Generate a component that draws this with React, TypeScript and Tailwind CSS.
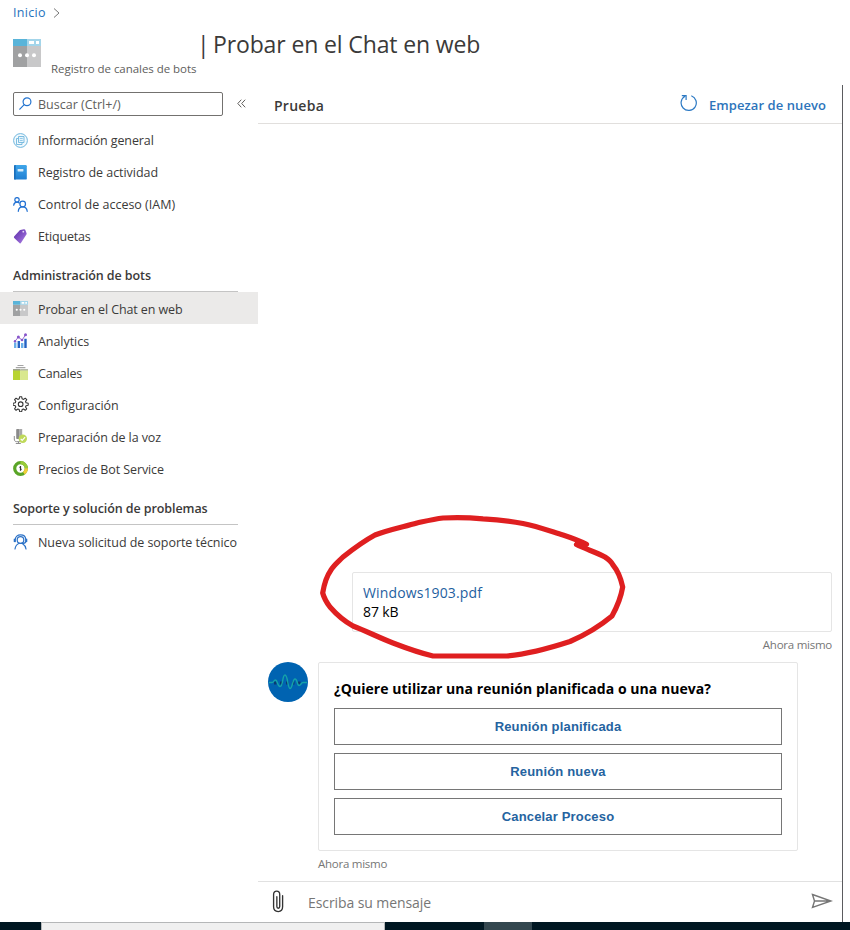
import React from 'react';

function BotIcon({ size }: { size: number }) {
  return (
    <svg width={size} height={size} viewBox="0 0 28 28" className="shrink-0">
      <path fill="#a0a1a2" d="M0 7h14v21H0z" />
      <path fill="#c8c8c9" d="M14 7h14v21H14z" />
      <path fill="#59b4d9" d="M0 0h14v7H0z" />
      <path fill="#a3d5ea" d="M14 0h14v7H14z" />
      <path fill="#fff" d="M16 2h5v3h-5zM23 2h3v3h-3z" />
      <circle cx="7" cy="16.3" r="2" fill="#fff" />
      <circle cx="14" cy="16.3" r="2" fill="#fff" />
      <circle cx="21" cy="16.3" r="2" fill="#fff" />
    </svg>
  );
}

function InfoIcon() {
  return (
    <svg width="15" height="15" viewBox="0 0 15 15" fill="none" stroke="#6fb6de">
      <circle cx="7.5" cy="7.5" r="6.9" fill="#f1f9fd" strokeWidth="1" />
      <path d="M5.500 3.500h5.500v6H5.500z" fill="#e6f4fc" strokeWidth=".9" />
      <path d="M5.300 5.500H3.500v6h5.500V9.600" strokeWidth=".9" />
      <path d="M6.800 5.500h2.900M6.800 7.500h2.900" strokeWidth=".7" />
    </svg>
  );
}

function LogIcon() {
  return (
    <svg width="15" height="15" viewBox="0 0 15 15">
      <defs>
        <linearGradient id="book" x1="0" y1="0" x2="0" y2="1">
          <stop offset="0" stopColor="#3fa6ea" />
          <stop offset="1" stopColor="#1f7fd3" />
        </linearGradient>
      </defs>
      <rect x="1" y="0" width="12.800" height="14.600" rx="1.200" fill="url(#book)" />
      <path d="M1 1.200A1.200 1.200 0 0 1 2.200 0h.5v14.600h-.5A1.200 1.200 0 0 1 1 13.400z" fill="#1c6fbb" />
      <rect x="4.600" y="3.900" width="5.800" height="2.500" rx=".3" fill="#d5ebfa" />
    </svg>
  );
}

function AccessIcon() {
  return (
    <svg width="15" height="15" viewBox="0 0 15 15" fill="none" stroke="#2372d3" strokeWidth="1.250" strokeLinecap="round">
      <circle cx="4" cy="2.800" r="2.200" />
      <path d="M.7 8.200C.9 6.200 2.200 5.100 4 5.100c.9 0 1.600.3 2.200.8" />
      <circle cx="9.700" cy="7" r="2.800" />
      <path d="M5.300 14.300c.2-2.900 1.900-4.500 4.400-4.500s4.200 1.600 4.500 4.500" />
    </svg>
  );
}

function TagIcon() {
  return (
    <svg width="15" height="15" viewBox="0 0 15 15">
      <defs>
        <linearGradient id="tag" x1="0" y1="0" x2="1" y2="1">
          <stop offset="0" stopColor="#5b2ea6" />
          <stop offset=".55" stopColor="#8657c9" />
          <stop offset="1" stopColor="#b58be8" />
        </linearGradient>
      </defs>
      <path d="M7.300 1.100 11 .2c.5-.1.900.1 1.200.500l1.400 3.500c.2.400.1.900-.2 1.300l-5.500 8.600c-.3.500-.8.500-1.200.1L1.200 8.900c-.4-.4-.4-.9-.1-1.300l5.200-5.900c.3-.3.600-.5 1-.6z" fill="url(#tag)" />
      <circle cx="10.300" cy="2.700" r=".9" fill="#e8d9f8" />
    </svg>
  );
}

function AnalyticsIcon() {
  return (
    <svg width="15" height="15" viewBox="0 0 15 15">
      <path fill="#69afe9" d="M1 9.500h2.400V15H1zM8 10h2.400v5H8z" />
      <path fill="#2463c4" d="M4.600 8H7v7H4.600zM11.300 5.800h2.400V15h-2.400z" />
      <path fill="none" stroke="#9a6bd0" strokeWidth="1" d="m2 8.300 3.300-4.200 3.800 3 3.500-5.400" />
      <g fill="#8755ca">
        <circle cx="2" cy="8.200" r="1.200" />
        <circle cx="5.400" cy="4" r="1.500" />
        <circle cx="9" cy="7" r="1.300" />
        <circle cx="12.500" cy="1.700" r="1.500" />
      </g>
    </svg>
  );
}

function ChannelsIcon() {
  return (
    <svg width="15" height="15" viewBox="0 0 15 15">
      <path fill="#a5a5a5" d="M4.500 0h6v1h-6zM2.800 2h9.600v1.200H2.800z" />
      <path fill="#9ba18c" d="M0 4h7.500v2H0z" />
      <path fill="#b5b9aa" d="M7.500 4H15v2H7.500z" />
      <path fill="#b8d432" d="M0 5.500h7.500V15H0z" />
      <path fill="#d9e88e" d="M7.500 5.500H15V15H7.500z" />
    </svg>
  );
}

function GearIcon() {
  return (
    <svg width="16" height="16" viewBox="0 0 24 24" fill="none" stroke="#333" strokeWidth="1.600" strokeLinejoin="round">
      <path d="M10.500 1.500h3l.7 3.200 2 .8 2.700-1.800 2.200 2.200-1.800 2.700.8 2 3.200.6v3l-3.200.7-.8 2 1.800 2.700-2.200 2.200-2.700-1.800-2 .8-.7 3.200h-3l-.7-3.200-2-.8-2.700 1.800-2.200-2.200 1.800-2.700-.8-2-3.200-.7v-3l3.200-.6.8-2-1.800-2.700 2.200-2.200 2.700 1.800 2-.8z" transform="translate(-.500 -.400)" />
      <circle cx="11.500" cy="12.300" r="3.500" />
    </svg>
  );
}

function VoiceIcon() {
  return (
    <svg width="15" height="15" viewBox="0 0 15 15">
      <rect x="3.200" y="0" width="3.200" height="10" rx=".8" fill="#8b8b8b" />
      <rect x="6.200" y="0" width="3" height="9" fill="#a9a9a9" />
      <path d="M1.300 7v3c0 2 1 2.700 2.400 2.700H8M5.500 12.700v1.700M2.800 14.500h5" fill="none" stroke="#8e8e8e" strokeWidth="1" />
      <circle cx="9.800" cy="9.800" r="4.200" fill="#bfd95a" />
      <path d="m7.700 9.800 1.500 1.600 2.900-3.200" fill="none" stroke="#fff" strokeWidth="1.100" />
    </svg>
  );
}

function PricingIcon() {
  return (
    <svg width="15" height="15" viewBox="0 0 15 15">
      <circle cx="7.500" cy="7.500" r="5.800" fill="#fff" stroke="#5aa527" strokeWidth="3.200" />
      <path d="M7.500 1.700a5.800 5.800 0 0 1 5.800 5.800" fill="none" stroke="#99cb38" strokeWidth="3.200" />
      <path d="M13.300 7.300a5.800 5.800 0 0 1-2.400 4.900" fill="none" stroke="#f2cf3a" strokeWidth="3.200" />
      <path d="M7.500 5v4.800M6.500 6.300h1.500M7 8.400h1.600" fill="none" stroke="#333" strokeWidth="1.200" />
    </svg>
  );
}

function SupportIcon() {
  return (
    <svg width="15" height="16" viewBox="0 0 15 16" fill="none" stroke="#2c72c7" strokeWidth="1.200" strokeLinecap="round">
      <circle cx="7.500" cy="6" r="3.300" />
      <path d="M2.300 7.600V5.600C2.300 2.600 4.500.8 7.500.8s5.200 1.800 5.200 4.800v2c0 1.200-.8 1.700-2.300 1.700H7.800M1.300 5.200v2.400M13.700 5.200v2.400" />
      <path d="M2 15c.5-2.900 2-4.900 4.300-5.700M13 15c-.4-2.500-1.600-4.300-3.400-5.300" />
    </svg>
  );
}

type Item = { label: string; icon: React.ReactNode; track: string; active?: boolean };

const general: Item[] = [
  { label: 'Información general', icon: <InfoIcon />, track: 'tracking-[-0.11px]' },
  { label: 'Registro de actividad', icon: <LogIcon />, track: 'tracking-[-0.05px]' },
  { label: 'Control de acceso (IAM)', icon: <AccessIcon />, track: 'tracking-[0px]' },
  { label: 'Etiquetas', icon: <TagIcon />, track: 'tracking-[-0.19px]' },
];

const bots: Item[] = [
  { label: 'Probar en el Chat en web', icon: <BotIcon size={15} />, track: 'tracking-[-0.1px]', active: true },
  { label: 'Analytics', icon: <AnalyticsIcon />, track: 'tracking-[-0.05px]' },
  { label: 'Canales', icon: <ChannelsIcon />, track: 'tracking-[-0.22px]' },
  { label: 'Configuración', icon: <GearIcon />, track: 'tracking-[-0.05px]' },
  { label: 'Preparación de la voz', icon: <VoiceIcon />, track: 'tracking-[-0.08px]' },
  { label: 'Precios de Bot Service', icon: <PricingIcon />, track: 'tracking-[-0.1px]' },
];

const support: Item[] = [
  { label: 'Nueva solicitud de soporte técnico', icon: <SupportIcon />, track: 'tracking-[-0.05px]' },
];

function Menu({ items, textPad = 'pt-0.5' }: { items: Item[]; textPad?: string }) {
  return (
    <ul>
      {items.map((it) => (
        <li key={it.label} className={`flex h-8 items-center pl-[13px] ${it.active ? 'bg-[#ebeae9]' : ''}`}>
          <span className="flex w-[25px] shrink-0 items-center">{it.icon}</span>
          <span className={`whitespace-nowrap ${textPad} ${it.track}`}>{it.label}</span>
        </li>
      ))}
    </ul>
  );
}

function Heading({ children }: { children: string }) {
  return (
    <h2 className="mr-5 ml-[13px] flex h-8 items-center border-b border-[#c4c4c4] font-semibold tracking-[-0.08px]">
      {children}
    </h2>
  );
}

function ChoiceButton({ children }: { children: string }) {
  return (
    <button className="h-[37px] w-full border border-[#767676] bg-white pt-px font-['Liberation_Sans',Arial,sans-serif] text-[13px] font-bold tracking-[0.17px] text-[#2563a0]">
      {children}
    </button>
  );
}

export default function App() {
  return (
    <div className="relative flex h-[930px] w-[850px] flex-col overflow-hidden bg-white font-['Open_Sans','Noto_Sans',sans-serif] text-[12.5px] leading-[18px] text-[#3b3a39]">
      <header className="h-[85px] shrink-0">
        <nav className="flex h-[25px] items-center gap-[7px] pl-[13px]">
          <a className="tracking-[0.3px] text-[#2672bd]">Inicio</a>
          <svg width="7" height="10" viewBox="0 0 7 10" fill="none" stroke="#777" strokeWidth="1">
            <path d="m1 .5 5 4.500-5 4.500" />
          </svg>
        </nav>
        <div className="flex pl-[13px]">
          <div className="pt-[14px]">
            <BotIcon size={28} />
          </div>
          <div className="w-[150px] pt-[35px] pl-[10px] text-[11.5px] whitespace-nowrap tracking-[-0.04px] text-[#605e5c]">
            Registro de canales de bots
          </div>
          <h1 className="flex pt-1 pl-1.5 text-[23px] leading-[30px] whitespace-nowrap tracking-[-0.13px]">
            <span className="w-4">|</span>
            <span>Probar en el Chat en web</span>
          </h1>
        </div>
      </header>

      <div className="flex h-[837px] shrink-0">
        <aside className="w-[258px] shrink-0">
          <div className="flex h-[39px] items-center pb-0.5 pl-[13px]">
            <div className="flex h-6 w-[210px] items-center rounded-[2px] border border-[#73716f] pl-[5px] text-[#605e5c]">
              <svg width="13" height="13" viewBox="0 0 13 13" fill="none" stroke="#2474cf" strokeWidth="1.200" strokeLinecap="round">
                <circle cx="8" cy="4.800" r="3.900" />
                <path d="M5.200 7.700.8 12.200" />
              </svg>
              <span className="pt-[3px] pl-1.5">Buscar (Ctrl+/)</span>
            </div>
            <svg className="ml-[14px]" width="9" height="9" viewBox="0 0 9 9" fill="none" stroke="#605e5c" strokeWidth="1">
              <path d="M4.300.700.8 4.500l3.500 3.800M8.200.700 4.700 4.500l3.500 3.800" />
            </svg>
          </div>
          <Menu items={general} />
          <div className="h-2" />
          <Heading>Administración de bots</Heading>
          <Menu items={bots} textPad="pt-1" />
          <div className="h-[9px]" />
          <Heading>Soporte y solución de problemas</Heading>
          <div className="h-px" />
          <Menu items={support} />
        </aside>

        <main className="flex w-[585px] flex-col border-r border-[#5b5b5e]">
          <div className="flex h-[39px] shrink-0 items-center border-b border-[#e1dfdd] pr-4 pl-4">
            <h2 className="pt-[3px] text-[14px] font-semibold tracking-[0.26px]">Prueba</h2>
            <div className="ml-auto flex items-center gap-[11px] text-[#2d74bb]">
              <svg width="18" height="18" viewBox="0 0 18 18" fill="none" stroke="#2d7ac4" strokeWidth="1.200" className="mb-0.5">
                <path d="M11.300 1.700A7.600 7.600 0 1 1 5 2.200M1.800 1.700h4.300v4.200" />
              </svg>
              <span className="pt-px text-[13px] font-semibold tracking-[0.07px]">Empezar de nuevo</span>
            </div>
          </div>

          <div className="flex grow flex-col justify-end pr-[10px] pl-[10px]">
            <div className="ml-[84px] h-[60px] rounded-[2px] border border-[#e5e5e5] pt-[10px] pl-[10px] text-[14px] leading-[19px] text-black">
              <div className="tracking-[0.13px] text-[#1f5f9f]">Windows1903.pdf</div>
              <div className="tracking-[-0.1px]">87 kB</div>
            </div>
            <div className="flex h-[30px] items-center justify-end pb-1 text-[11.5px] tracking-[-0.25px] text-[#767676]">
              Ahora mismo
            </div>
            <div className="flex gap-[10px]">
              <svg width="40" height="40" viewBox="0 0 40 40" className="shrink-0">
                <circle cx="20" cy="20" r="20" fill="#0063b1" />
                <path d="M6 21h30" fill="none" stroke="#0a3a70" strokeWidth="3" strokeDasharray="2.500 3.500" />
                <path d="M1 20.500h3c2 0 1.500-2.500 3.500-2.500s2 6.500 4.500 6.500c3.500 0 2-11.500 5-11.500s2.500 13.500 5 13.500 2.500-9.500 5-9.500 2 6.500 4 6.500 2-3 4-3h4" fill="none" stroke="#15a3a8" strokeWidth="1.400" />
              </svg>
              <div className="h-[189px] w-[480px] rounded-[2px] border border-[#e5e5e5] px-[15px] pt-4">
                <div className="mb-[10px] h-[19px] text-[14px] leading-[20px] font-bold whitespace-nowrap tracking-[0.05px] text-black">
                  ¿Quiere utilizar una reunión planificada o una nueva?
                </div>
                <div className="flex flex-col gap-2">
                  <ChoiceButton>Reunión planificada</ChoiceButton>
                  <ChoiceButton>Reunión nueva</ChoiceButton>
                  <ChoiceButton>Cancelar Proceso</ChoiceButton>
                </div>
              </div>
            </div>
            <div className="flex h-[30px] items-center pb-1 pl-[50px] text-[11.5px] tracking-[-0.25px] text-[#767676]">
              Ahora mismo
            </div>
          </div>

          <div className="flex h-[41px] shrink-0 items-center border-t border-[#e1e1e1] pr-[9px] pb-0.5 pl-[14px]">
            <svg width="12" height="23" viewBox="0 0 12 24" fill="none" stroke="#333" strokeWidth="1.400" strokeLinecap="round">
              <path d="M10.800 6v11.500c0 3-1.800 5-4.600 5s-4.800-2-4.800-5V4.700C1.400 2.500 2.700 1.200 4.600 1.200S7.800 2.500 7.800 4.700v12.600c0 1-.6 1.700-1.500 1.700s-1.500-.7-1.500-1.700V7" />
            </svg>
            <span className="pt-[3px] pl-[24px] text-[14px] tracking-[-0.09px] text-[#767676]">Escriba su mensaje</span>
            <svg className="ml-auto" width="22" height="16" viewBox="0 0 22 16" fill="none" stroke="#767676" strokeWidth="1.400">
              <path d="M1.500 1.500 20 8 1.500 14.500 3.500 8zM3.500 8H19" />
            </svg>
          </div>
        </main>
      </div>

      <footer className="flex h-2 shrink-0 bg-[#001722]">
        <div className="ml-[41px] h-2 w-[344px] border-t border-r border-l border-[#b5b7b8] bg-[#f0f0f0]" />
        <div className="ml-[99px] h-2 w-12 bg-[#34474f]" />
      </footer>

      <svg className="pointer-events-none absolute top-[505px] left-[310px]" width="330" height="160" viewBox="310 505 330 160" fill="none" stroke="#df1f20" strokeWidth="5.200" strokeLinecap="round" strokeLinejoin="round">
        <path d="M586.500 544.300C580 541 572 538 563 535C550 531 536 526 523 523.500C510 521 496 519.500 483 518.800C469 517.500 455 517.300 443 518C434 519 426 521 417 523C403 527 388 530 375 535C364 541 353 549 343 557C338 562 334 565 331 570C326 577 324 585 322.700 593C324 598 327 603 330 607C337 615 344 621 353 626C366 631 380 638 393 643C406 648 420 653 433 656H507C529 654 550 648 570 641.500C585 635 600 626 612 616C617 607 621 597 622.700 587C621 579 618 571 613 565C611 561 608 559 605 557C596 552 585 549 576.500 544.500" />
      </svg>
    </div>
  );
}
